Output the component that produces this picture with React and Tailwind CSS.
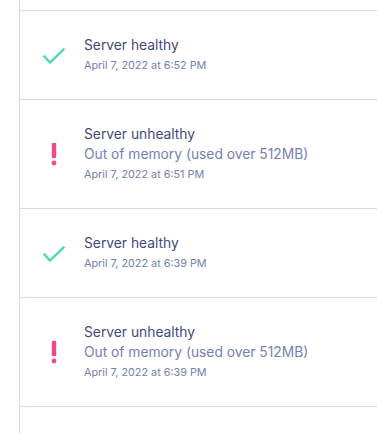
import React from "react";

const Check = () => (
  <svg width="22" height="18" viewBox="0 0 22 18" className="mt-[3px]">
    <polyline points="1.5,8.5 7,14.5 20.5,1.5" fill="none" stroke="#4fd8b6" strokeWidth="2.4" strokeLinecap="square" />
  </svg>
);

const Bang = () => (
  <svg width="6" height="23" viewBox="0 0 6 23">
    <rect x="0.8" y="0" width="4.4" height="15" rx="0.8" fill="#f7497f" />
    <circle cx="3" cy="20" r="2.4" fill="#f7497f" />
  </svg>
);

const events = [
  { ok: true, time: "April 7, 2022 at 6:52 PM" },
  { ok: false, time: "April 7, 2022 at 6:51 PM" },
  { ok: true, time: "April 7, 2022 at 6:39 PM" },
  { ok: false, time: "April 7, 2022 at 6:39 PM" },
];

export default function App() {
  return (
    <div className="h-[434px] w-[377px] overflow-hidden bg-white" style={{ fontFamily: "Inter, 'Noto Sans', sans-serif" }}>
      <div className="ml-[19px] h-[433px] border-l border-[#d3dcef]">
        <div className="h-[11px] border-b border-[#d3dcef]" />
        {events.map((e, i) => (
          <div key={i} className="flex items-center border-b border-[#d3dcef] pt-6 pb-[24px]">
            <div className="flex w-[64px] shrink-0 justify-center pl-[4px]">
              {e.ok ? <Check /> : <Bang />}
            </div>
            <div className="flex flex-col">
              <div className="text-[13.8px] leading-[20px] text-[#3f4a7a]">
                {e.ok ? "Server healthy" : "Server unhealthy"}
              </div>
              {!e.ok && (
                <div className="text-[13.8px] leading-[20px] text-[#7480b3]">
                  Out of memory (used over 512MB)
                </div>
              )}
              <div className="pt-[2px] text-[10.8px] leading-[18px] text-[#7480ac]">{e.time}</div>
            </div>
          </div>
        ))}
      </div>
    </div>
  );
}
